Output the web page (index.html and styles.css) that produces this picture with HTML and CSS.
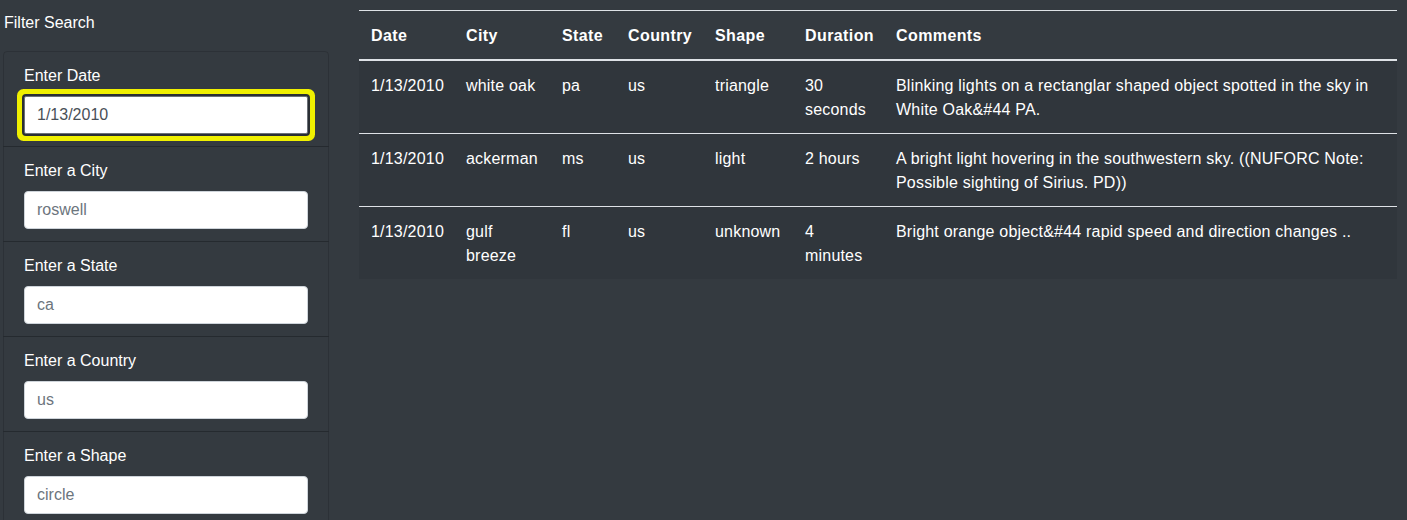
FILE: index.html
```html
<!DOCTYPE html>
<html lang="en">
<head>
<meta charset="utf-8">
<title>UFO Sightings</title>
<link rel="stylesheet" href="styles.css">
</head>
<body>
<div class="page">
  <aside class="sidebar">
    <div class="sidebar-title">Filter Search</div>
    <ul class="filters">
      <li class="filter">
        <label class="filter-label" for="datetime">Enter Date</label>
        <input class="filter-input focused" id="datetime" type="text" value="1/13/2010">
      </li>
      <li class="filter">
        <label class="filter-label" for="city">Enter a City</label>
        <input class="filter-input" id="city" type="text" placeholder="roswell">
      </li>
      <li class="filter">
        <label class="filter-label" for="state">Enter a State</label>
        <input class="filter-input" id="state" type="text" placeholder="ca">
      </li>
      <li class="filter">
        <label class="filter-label" for="country">Enter a Country</label>
        <input class="filter-input" id="country" type="text" placeholder="us">
      </li>
      <li class="filter">
        <label class="filter-label" for="shape">Enter a Shape</label>
        <input class="filter-input" id="shape" type="text" placeholder="circle">
      </li>
    </ul>
  </aside>
  <main class="results">
    <table class="ufo-table">
      <thead>
        <tr>
          <th class="c-date">Date</th>
          <th class="c-city">City</th>
          <th class="c-state">State</th>
          <th class="c-country">Country</th>
          <th class="c-shape">Shape</th>
          <th class="c-duration">Duration</th>
          <th class="c-comments">Comments</th>
        </tr>
      </thead>
      <tbody>
        <tr>
          <td>1/13/2010</td>
          <td>white oak</td>
          <td>pa</td>
          <td>us</td>
          <td>triangle</td>
          <td>30 seconds</td>
          <td>Blinking lights on a rectanglar shaped object spotted in the sky in White Oak&amp;#44 PA.</td>
        </tr>
        <tr>
          <td>1/13/2010</td>
          <td>ackerman</td>
          <td>ms</td>
          <td>us</td>
          <td>light</td>
          <td>2 hours</td>
          <td>A bright light hovering in the southwestern sky. ((NUFORC Note: Possible sighting of Sirius. PD))</td>
        </tr>
        <tr>
          <td>1/13/2010</td>
          <td>gulf breeze</td>
          <td>fl</td>
          <td>us</td>
          <td>unknown</td>
          <td>4 minutes</td>
          <td>Bright orange object&amp;#44 rapid speed and direction changes ..</td>
        </tr>
      </tbody>
    </table>
  </main>
</div>
</body>
</html>
```
FILE: styles.css
```css
* {
  box-sizing: border-box;
}

html, body {
  margin: 0;
  padding: 0;
  background: #343a40;
  color: #ffffff;
  font-family: "Liberation Sans", Arial, sans-serif;
  font-size: 16px;
  line-height: 1.5;
  height: 100%;
  overflow: hidden;
}

.page {
  display: grid;
  grid-template-columns: 326px 1038px;
  column-gap: 30px;
  padding: 0 10px 0 3px;
}

.sidebar-title {
  padding-top: 11px;
  padding-left: 1px;
  line-height: 24px;
  margin-bottom: 16px;
}

.filters {
  list-style: none;
  margin: 0;
  padding: 0;
}

.filter {
  display: flex;
  flex-direction: column;
  padding: 12px 20px;
  border: 1px solid rgba(0, 0, 0, 0.14);
  margin-bottom: -1px;
}

.filter:first-child {
  border-top-left-radius: 4px;
  border-top-right-radius: 4px;
}

.filter-label {
  display: block;
  line-height: 24px;
  margin-bottom: 8px;
  color: #ffffff;
}

.filter-input {
  display: block;
  width: 100%;
  height: 38px;
  padding: 6px 12px;
  font-family: inherit;
  font-size: 16px;
  line-height: 24px;
  color: #495057;
  background: #ffffff;
  border: 1px solid #ced4da;
  border-radius: 4px;
}

.filter-input::placeholder {
  color: #6c757d;
  opacity: 1;
}

.filter-input.focused {
  border: 1px solid #6b7077;
  border-radius: 2px;
  box-shadow: 0 0 0 2px #2a2f34, 0 0 0 7px #f0f000;
  outline: none;
}

.ufo-table {
  margin-top: 10px;
  width: 100%;
  border-collapse: collapse;
  table-layout: fixed;
}

.ufo-table th,
.ufo-table td {
  padding: 13px 12px 11px;
  text-align: left;
  vertical-align: top;
  line-height: 24px;
  border-top: 1px solid #dee2e6;
}

.ufo-table td {
  letter-spacing: 0.2px;
}

.ufo-table th {
  font-weight: 700;
  letter-spacing: 0.4px;
  border-bottom: 2px solid #dee2e6;
}

.ufo-table tbody {
  background: #30363c;
}

.ufo-table tbody tr:first-child td {
  border-top: none;
}

.c-date { width: 95px; }
.c-city { width: 96px; }
.c-state { width: 66px; }
.c-country { width: 87px; }
.c-shape { width: 90px; }
.c-duration { width: 91px; }
.c-comments { width: auto; }
```
